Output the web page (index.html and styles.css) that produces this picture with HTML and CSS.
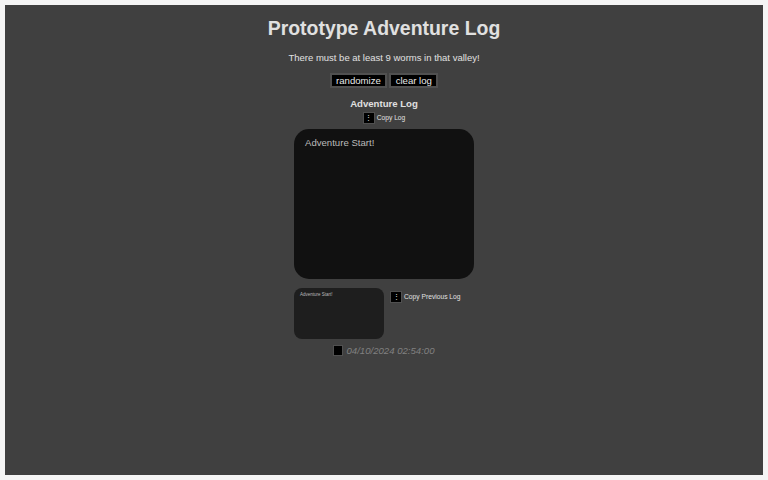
FILE: index.html
```html
<!DOCTYPE html>
<html lang="en">
<head>
  <meta charset="UTF-8">
  <title>Prototype Adventure Log</title>
  <link rel="stylesheet" href="styles.css">
</head>
<body>
  <div class="container">
    <h1>Prototype Adventure Log</h1>
    <p class="tagline">There must be at least 9 worms in that valley!</p>
    <div class="controls">
      <button>randomize</button>
      <button>clear log</button>
    </div>
    <h2>Adventure Log</h2>
    <div class="copy-row">
      <button class="copy-btn">⋮</button>
      <span>Copy Log</span>
    </div>
    <div class="log">Adventure Start!</div>
    <div class="previous">
      <div class="log-small">Adventure Start!</div>
      <div class="copy-row">
        <button class="copy-btn">⋮</button>
        <span>Copy Previous Log</span>
      </div>
    </div>
    <div class="timestamp">
      <button class="stamp-btn"></button>
      <em>04/10/2024 02:54:00</em>
    </div>
  </div>
</body>
</html>
```

FILE: styles.css
```css
html, body {
  margin: 0;
  padding: 0;
  height: 100%;
}

body {
  background-color: #f5f5f5;
  padding: 5px;
  box-sizing: border-box;
  font-family: "Liberation Sans", Arial, sans-serif;
}

.container {
  height: 470px;
  width: 758px;
  background-color: #404040;
  color: #e0e0e0;
  display: flex;
  flex-direction: column;
  align-items: center;
  opacity: 0.999; /* grey text edges */
}

h1 {
  margin: 12px 0 0;
  font-size: 19.45px;
  line-height: 23px;
  font-weight: bold;
  color: #e0e0e0;
}

.tagline {
  margin: 11px 0 0;
  font-size: 9.5px;
  line-height: 13px;
}

.controls {
  margin-top: 9px;
  display: flex;
  gap: 2px;
}

button {
  font-family: inherit;
  background-color: #000;
  color: #e8e8e8;
  border: 2px solid #505050;
  padding: 0 4.4px;
  font-size: 9.6px;
  height: 15px;
  line-height: 11px;
}

h2 {
  margin: 10px 0 0;
  font-size: 9.6px;
  line-height: 12px;
  font-weight: bold;
}

.copy-row {
  display: flex;
  align-items: center;
  gap: 2px;
  font-size: 6.7px;
  color: #e0e0e0;
}

.copy-row span {
  padding-bottom: 2px;
}

.container > .copy-row {
  margin-top: 2px;
}

.copy-btn {
  width: 12px;
  height: 12px;
  padding: 0;
  border: 1px solid #505050;
  font-size: 7px;
  line-height: 8px;
}

.log {
  margin-top: 5px;
  width: 180px;
  height: 150px;
  box-sizing: border-box;
  padding: 8px 11px;
  background-color: #111;
  border-radius: 15px;
  color: #bbb;
  font-size: 9.6px;
  line-height: 11px;
}

.previous {
  margin-top: 9px;
  width: 180px;
  display: flex;
  align-items: flex-start;
  gap: 6px;
}

.previous .copy-row {
  margin-top: 3px;
}

.log-small {
  width: 90px;
  height: 51px;
  flex-shrink: 0;
  box-sizing: border-box;
  padding: 4px 6px;
  background-color: #1e1e1e;
  border-radius: 8px;
  color: #bbb;
  font-size: 4.5px;
  line-height: 6px;
}

.timestamp {
  margin-top: 6px;
  display: flex;
  align-items: center;
  gap: 3px;
  font-size: 9.6px;
  color: #808080;
}

.stamp-btn {
  width: 10px;
  height: 11px;
  padding: 0;
  border: 1px solid #505050;
}
```
